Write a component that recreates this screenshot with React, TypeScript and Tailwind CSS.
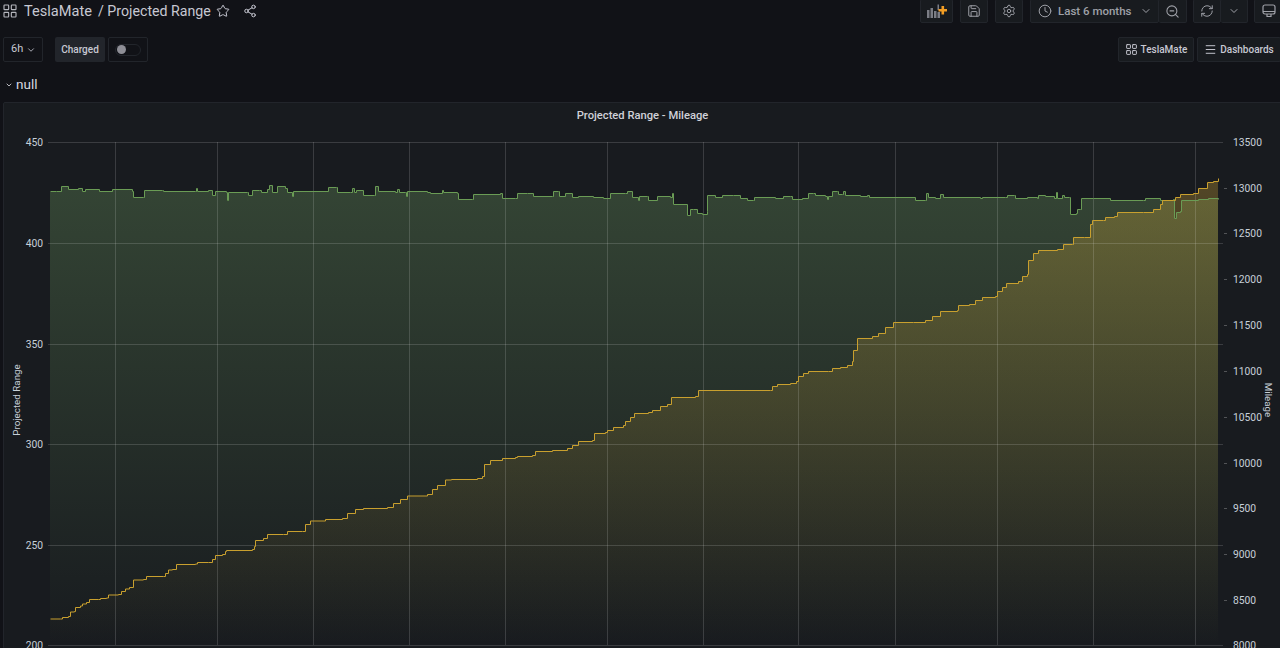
import { LayoutGrid, Star, Share2, Save, Settings, Clock, ZoomOut, RefreshCw, ChevronDown, Menu } from "lucide-react";

const yellow: number[][] = [[50,619.5],[60,619.5],[62,618],[68,617],[70,612.5],[74,612],[75,608],[80,606.5],[82,604.5],[86,603],[89,600],[98,600],[100,599],[106,598.5],[108,595.5],[118,595],[121,592],[125,589.5],[129,588],[133,580.5],[143,580],[146,577],[163,577],[165,574],[168,570.5],[172,570],[176,565],[195,564.5],[197,563],[208,563],[212,560],[215,556],[222,555],[225,552],[226,551],[252,550],[254,547],[255,541],[263,539],[267,535],[283,535],[287,532],[302,532],[305,525],[310,521.5],[325,520],[342,519],[347,514],[355,510],[363,509],[387,508],[393,504],[400,500],[407,496.5],[427,495],[432,490],[437,486],[445,480.5],[451,480],[477,479],[482,477],[484,465],[490,461],[502,459],[515,458],[517,457],[532,456],[535,452],[552,451],[567,449],[572,446],[578,442],[592,441],[594,434],[605,433],[607,431],[613,428],[623,426],[625,422],[630,418],[634,414],[648,413],[652,411],[660,407],[667,405],[671,398],[695,397],[698,391],[770,391],[772,387],[777,385],[790,384],[796,382],[798,377],[803,374],[808,372],[828,372],[832,369],[840,368],[847,366],[852,362],[853,351],[857,351],[857,339],[872,337],[878,334],[885,328],[893,323],[913,323],[925,321],[932,317],[940,312],[957,311],[958,306],[969,305],[975,301],[982,298],[995,297],[997,292],[1002,288],[1006,284],[1018,282],[1022,277],[1027,275],[1028,261],[1033,254],[1038,251],[1057,250],[1063,245],[1072,245],[1073,238],[1084,238],[1090,225],[1092,221],[1103,221],[1105,218],[1114,217],[1117,213],[1143,213],[1153,210],[1160,205],[1162,201],[1173,201],[1175,198],[1180,195],[1193,194],[1198,189],[1207,183],[1213,182],[1218,179]];

const green: number[][] = [[50,192],[56,192],[61,187],[68,190],[78,189],[82,192],[85,190],[99,192],[112,190],[132,192],[133,198],[143,198],[144,191],[162,191],[163,192],[195,192],[196,189],[197,192],[208,191],[212,196],[215,192],[226,193],[227,201],[228,193],[247,193],[248,196],[252,191],[259,191],[261,193],[267,190],[269,186],[272,193],[277,187],[285,189],[287,193],[292,197],[293,192],[328,192],[328,188],[336,188],[337,193],[350,193],[352,189],[354,193],[356,191],[363,191],[363,196],[374,196],[375,187],[378,192],[395,193],[397,190],[399,193],[405,193],[406,197],[407,192],[427,193],[430,194],[442,191],[443,193],[457,194],[458,200],[472,200],[473,195],[500,194],[502,199],[515,199],[517,194],[527,194],[533,197],[552,197],[553,192],[558,192],[559,197],[565,194],[572,198],[578,197],[593,198],[603,199],[610,194],[625,194],[627,192],[632,198],[638,201],[639,197],[647,197],[648,201],[657,197],[670,198],[672,194],[673,205],[687,205],[687,216],[690,210],[693,210],[697,214],[702,215],[707,212],[707,196],[715,198],[722,196],[733,196],[740,199],[747,201],[753,201],[754,198],[775,199],[783,197],[790,197],[792,200],[802,199],[808,194],[813,194],[815,196],[825,197],[827,200],[828,197],[832,192],[837,192],[838,195],[842,195],[843,192],[845,196],[860,197],[867,196],[869,198],[915,198],[915,201],[925,201],[926,194],[928,198],[935,199],[940,195],[943,198],[980,199],[982,198],[1005,198],[1007,196],[1014,196],[1015,199],[1027,198],[1037,199],[1038,196],[1045,197],[1054,199],[1056,193],[1057,199],[1062,196],[1064,198],[1069,198],[1070,215],[1076,214],[1077,210],[1080,210],[1081,199],[1093,199],[1110,201],[1143,201],[1145,199],[1160,201],[1173,200],[1174,219],[1176,213],[1180,212],[1181,201],[1198,200],[1208,199],[1218,200]];

const stepPath = (p: number[][]) => p.map((c, i) => (i === 0 ? `M${c[0]} ${c[1]}` : `H${c[0]}V${c[1]}`)).join("");
const areaPath = (p: number[][]) => `${stepPath(p)}V645H50Z`;

const hGrid = [142, 243, 344, 444, 545, 645];
const vGrid = [115, 217, 313, 409, 505, 607, 703, 798, 895, 997, 1093, 1195];
const leftLabels: [string, number][] = [["450", 142], ["400", 243], ["350", 344], ["300", 444], ["250", 545], ["200", 645]];
const rightLabels: [string, number][] = [["13500", 142], ["13000", 188], ["12500", 233], ["12000", 279], ["11500", 325], ["11000", 371], ["10500", 417], ["10000", 463], ["9500", 508], ["9000", 554], ["8500", 600], ["8000", 645]];

const btn = "flex h-full items-center justify-center rounded-[2px] border border-[#22252b] bg-[#181b1f] text-[#9fa1a8]";

export default function App() {
  return (
    <div className="h-[648px] overflow-hidden bg-[#111217] font-['Roboto',sans-serif] text-[#ccccdc]">
      <header className="-mt-px flex h-[24px] items-center justify-between">
        <div className="flex items-center">
          <LayoutGrid size={16} strokeWidth={1.7} className="ml-[2px] mt-[1px] text-[#b5b6bd]" />
          <span className="ml-[6px] mt-[1px] text-[14.6px] text-[#c7c8d2]">TeslaMate</span>
          <span className="ml-[6px] mt-[1px] text-[14.2px] text-[#c7c8d2]">/ Projected Range</span>
          <Star size={14} strokeWidth={1.7} className="ml-[5px] mt-[1px] text-[#c7c8d2]" />
          <Share2 size={14} strokeWidth={1.7} className="ml-[13px] mt-[1px] text-[#c7c8d2]" />
        </div>
        <div className="-mr-[2px] flex h-full items-stretch">
          <div className={`${btn} w-[33px]`}>
            <svg width="20" height="16" viewBox="0 0 20 16" aria-hidden="true">
              <path d="M0 7h2.5v8H0zM3.5 5h2.5v10H3.5zM7 8h2.5v7H7zM10.5 9h2.5v6h-2.5zM10.5 1.5h1.5V7h-1.5z" fill="#7b7d85" />
              <path d="M14.5 3h2.6v3H20v2.6h-2.9v3h-2.6v-3h-3V6h3z" fill="#f29d24" />
            </svg>
          </div>
          <div className={`${btn} ml-[7px] w-[28px]`}><Save size={14} strokeWidth={1.7} /></div>
          <div className={`${btn} ml-[7px] w-[28px]`}><Settings size={14} strokeWidth={1.7} /></div>
          <div className={`${btn} ml-[7px] w-[129px] justify-start text-[11.5px] font-medium`}>
            <Clock size={14} strokeWidth={1.7} className="ml-[7px]" />
            <span className="ml-[6px] mt-[1px]">Last 6 months</span>
            <ChevronDown size={12} className="ml-[8px]" />
          </div>
          <div className={`${btn} w-[28px] border-l-0`}><ZoomOut size={15} strokeWidth={1.7} /></div>
          <div className={`${btn} ml-[6px] w-[28px]`}><RefreshCw size={14} strokeWidth={1.7} /></div>
          <div className={`${btn} w-[27px] border-l-0`}><ChevronDown size={12} /></div>
          <div className={`${btn} ml-[6px] w-[28px] pl-[2px]`}>
            <svg width="14" height="14" viewBox="0 0 14 14" fill="none" stroke="currentColor" strokeWidth="1.2" aria-hidden="true">
              <rect x="1" y="1" width="12" height="9" rx="2" />
              <path d="M1 7.5h12M5 10v2.5h4V10" />
            </svg>
          </div>
        </div>
      </header>

      <div className="mt-[14px] flex h-[25px] items-stretch justify-between">
        <div className="flex items-stretch">
          <div className="ml-[3px] flex w-[40px] items-center rounded-[2px] border border-[#22252b] pl-[7px] text-[11px] text-[#c7c8d2]">
            6h
            <ChevronDown size={10} strokeWidth={2} className="ml-[3px]" />
          </div>
          <div className="ml-[12px] flex w-[50px] items-center justify-center rounded-[2px] bg-[#22252b] text-[10px] font-medium text-[#c7c8d2]">Charged</div>
          <div className="ml-[3px] flex w-[40px] items-center justify-center rounded-[2px] border border-[#22252b]">
            <div className="flex h-[12px] w-[26px] items-center rounded-full border border-[#22252b] bg-[#111217]">
              <div className="ml-[1px] h-[9px] w-[9px] rounded-full bg-[#8e8e96]" />
            </div>
          </div>
        </div>
        <div className="-mr-[1px] flex items-stretch">
          <div className="flex w-[76px] items-center justify-center rounded-[2px] border border-[#22252b] bg-[#181b1f] text-[10px] font-medium text-[#c7c8d2]">
            <LayoutGrid size={13} strokeWidth={1.8} className="mr-[3px]" />
            TeslaMate
          </div>
          <div className="ml-[3px] flex w-[84px] items-center justify-center rounded-[2px] border border-[#22252b] bg-[#181b1f] text-[10px] font-medium text-[#c7c8d2]">
            <Menu size={13} strokeWidth={1.8} className="mr-[3px]" />
            Dashboards
          </div>
        </div>
      </div>

      <div className="mt-[13px] flex h-[19px] items-center text-[13.5px] text-[#d8d9e0]">
        <ChevronDown size={8} strokeWidth={2.5} className="ml-[5px]" />
        <span className="ml-[3px]">null</span>
      </div>

      <section className="mt-[8px] ml-[3px] -mr-[2px] rounded-[2px] border border-[#22252b] bg-[#181b1f]">
        <h2 className="flex h-[26px] items-center justify-center text-[11.2px] font-medium text-[#d0d1d8]">Projected Range - Mileage</h2>
        <svg width="1278" height="519" viewBox="4 129 1278 519" className="block">
          <defs>
            <linearGradient id="greenFill" gradientUnits="userSpaceOnUse" x1="0" y1="142" x2="0" y2="645">
              <stop offset="0" stopColor="#7EB26D" stopOpacity="0.3" />
              <stop offset="1" stopColor="#7EB26D" stopOpacity="0" />
            </linearGradient>
            <linearGradient id="yellowFill" gradientUnits="userSpaceOnUse" x1="0" y1="142" x2="0" y2="645">
              <stop offset="0" stopColor="#EAB839" stopOpacity="0.3" />
              <stop offset="1" stopColor="#EAB839" stopOpacity="0" />
            </linearGradient>
          </defs>
          <path d={areaPath(green)} fill="url(#greenFill)" />
          <path d={areaPath(yellow)} fill="url(#yellowFill)" />
          {hGrid.map((y) => (
            <line key={y} x1="48" x2="1223" y1={y + 0.5} y2={y + 0.5} stroke="#ffffff" strokeOpacity="0.15" />
          ))}
          {vGrid.map((x) => (
            <line key={x} x1={x + 0.5} x2={x + 0.5} y1="142" y2="645" stroke="#ffffff" strokeOpacity="0.15" />
          ))}
          <g transform="translate(0.5 -0.5)">
            <path d={stepPath(green)} fill="none" stroke="#6a9c55" strokeWidth="1" />
            <path d={stepPath(yellow)} fill="none" stroke="#c9a02e" strokeWidth="1" />
          </g>
          {rightLabels.filter((l) => !hGrid.includes(l[1])).map(([t, y]) => (
            <line key={t} x1="1224" x2="1227" y1={y + 0.5} y2={y + 0.5} stroke="#ffffff" strokeOpacity="0.25" />
          ))}
          <g fontFamily="Roboto, sans-serif" fontSize="10.3" fill="#c7d0d9">
            {leftLabels.map(([t, y]) => (
              <text key={t} x="43" y={y + 4} textAnchor="end">{t}</text>
            ))}
            {rightLabels.map(([t, y]) => (
              <text key={t} x="1233" y={y + 4}>{t}</text>
            ))}
            <text transform="translate(20 400) rotate(-90)" textAnchor="middle" fontSize="9.8">Projected Range</text>
            <text transform="translate(1265 400) rotate(90)" textAnchor="middle" fontSize="9.8">Mileage</text>
          </g>
        </svg>
      </section>
    </div>
  );
}
